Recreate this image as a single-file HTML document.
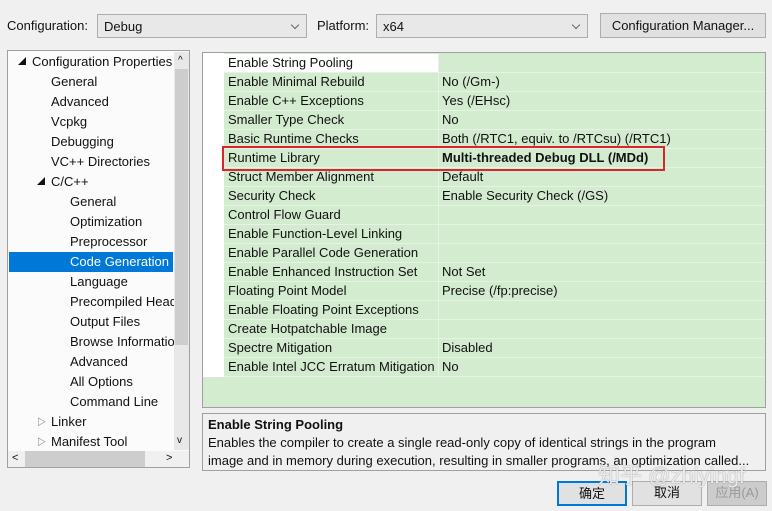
<!DOCTYPE html>
<html><head><style>
*{margin:0;padding:0;box-sizing:border-box}
body{width:772px;height:511px;background:#f0f0f0;font-family:"Liberation Sans","Noto Sans CJK SC",sans-serif;font-size:13px;color:#111;position:relative;overflow:hidden}
.a{position:absolute;white-space:nowrap}
.combo{position:absolute;border:1px solid #adadad;background:#e8e8e8;height:24px;padding:4px 6px}
.combo:after{content:"";position:absolute;right:8px;top:7px;width:5px;height:5px;border-right:1px solid #666;border-bottom:1px solid #666;transform:rotate(45deg)}
.btn{position:absolute;border:1px solid #adadad;background:#e1e1e1;text-align:center;line-height:22px}
.tree{position:absolute;left:7px;top:50px;width:183px;height:418px;border:1px solid #a0a0a0;background:#fbfbfb}
.ti{position:absolute;height:20px;line-height:20px;white-space:nowrap}
.grid{position:absolute;left:202px;top:52px;width:564px;height:356px;border:1px solid #a0a0a0;background:#d3ebcf}
.row{position:absolute;left:21px;width:541px;height:19px;border-bottom:1px solid #e6f2e3;line-height:18px;white-space:nowrap}
.row .n{position:absolute;left:4px}
.row .v{position:absolute;left:218px}
.row:before{content:"";position:absolute;left:214px;top:0;bottom:0;border-left:1px solid #e8f3e6}
</style></head><body>
<div class="a" style="left:7px;top:18px">Configuration:</div>
<div class="combo" style="left:97px;top:14px;width:210px">Debug</div>
<div class="a" style="left:317px;top:18px">Platform:</div>
<div class="combo" style="left:376px;top:14px;width:212px">x64</div>
<div class="btn" style="left:600px;top:13px;width:166px;height:25px;line-height:23px">Configuration Manager...</div>

<div class="tree">
<div class="a" style="left:166px;top:1px;width:15px;height:398px;background:#e8e8e8"></div>
<div class="a" style="left:167px;top:18px;width:13px;height:276px;background:#cdcdcd"></div>
<div class="a" style="left:170px;top:4px;font-size:10px">^</div>
<div class="a" style="left:169px;top:384px;font-size:10px">v</div>
<div class="a" style="left:0;top:400px;width:181px;height:16px;background:#f0f0f0"></div>
<div class="a" style="left:17px;top:400px;width:120px;height:16px;background:#cdcdcd"></div>
<div class="a" style="left:4px;top:401px;font-size:11px">&lt;</div>
<div class="a" style="left:158px;top:401px;font-size:11px">&gt;</div>
<div class="a" style="left:1px;top:201px;width:164px;height:20px;background:#0078d7"></div>
<div class="ti" style="left:10px;top:1px;font-size:8px">◢</div>
<div class="ti" style="left:24px;top:1px;width:142px;overflow:hidden">Configuration Properties</div>
<div class="ti" style="left:43px;top:21px">General</div>
<div class="ti" style="left:43px;top:41px">Advanced</div>
<div class="ti" style="left:43px;top:61px">Vcpkg</div>
<div class="ti" style="left:43px;top:81px">Debugging</div>
<div class="ti" style="left:43px;top:101px">VC++ Directories</div>
<div class="ti" style="left:29px;top:121px;font-size:8px">◢</div>
<div class="ti" style="left:43px;top:121px">C/C++</div>
<div class="ti" style="left:62px;top:141px">General</div>
<div class="ti" style="left:62px;top:161px">Optimization</div>
<div class="ti" style="left:62px;top:181px">Preprocessor</div>
<div class="ti" style="left:62px;top:201px;color:#fff">Code Generation</div>
<div class="ti" style="left:62px;top:221px">Language</div>
<div class="ti" style="left:62px;top:241px;width:104px;overflow:hidden">Precompiled Headers</div>
<div class="ti" style="left:62px;top:261px">Output Files</div>
<div class="ti" style="left:62px;top:281px;width:104px;overflow:hidden">Browse Information</div>
<div class="ti" style="left:62px;top:301px">Advanced</div>
<div class="ti" style="left:62px;top:321px">All Options</div>
<div class="ti" style="left:62px;top:341px">Command Line</div>
<div class="ti" style="left:29px;top:361px;font-size:9px;color:#555">▷</div>
<div class="ti" style="left:43px;top:361px">Linker</div>
<div class="ti" style="left:29px;top:381px;font-size:9px;color:#555">▷</div>
<div class="ti" style="left:43px;top:381px">Manifest Tool</div>
</div>

<div class="grid">
<div class="a" style="left:0;top:0;width:21px;height:324px;background:#fff"></div>
<div class="a" style="left:21px;top:1px;width:214px;height:19px;background:#fff"></div>
<div class="row" style="top:1px"><span class="n">Enable String Pooling</span></div>
<div class="row" style="top:20px"><span class="n">Enable Minimal Rebuild</span><span class="v">No (/Gm-)</span></div>
<div class="row" style="top:39px"><span class="n">Enable C++ Exceptions</span><span class="v">Yes (/EHsc)</span></div>
<div class="row" style="top:58px"><span class="n">Smaller Type Check</span><span class="v">No</span></div>
<div class="row" style="top:77px"><span class="n">Basic Runtime Checks</span><span class="v">Both (/RTC1, equiv. to /RTCsu) (/RTC1)</span></div>
<div class="row" style="top:96px"><span class="n">Runtime Library</span><span class="v" style="font-weight:bold">Multi-threaded Debug DLL (/MDd)</span></div>
<div class="row" style="top:115px"><span class="n">Struct Member Alignment</span><span class="v">Default</span></div>
<div class="row" style="top:134px"><span class="n">Security Check</span><span class="v">Enable Security Check (/GS)</span></div>
<div class="row" style="top:153px"><span class="n">Control Flow Guard</span></div>
<div class="row" style="top:172px"><span class="n">Enable Function-Level Linking</span></div>
<div class="row" style="top:191px"><span class="n">Enable Parallel Code Generation</span></div>
<div class="row" style="top:210px"><span class="n">Enable Enhanced Instruction Set</span><span class="v">Not Set</span></div>
<div class="row" style="top:229px"><span class="n">Floating Point Model</span><span class="v">Precise (/fp:precise)</span></div>
<div class="row" style="top:248px"><span class="n">Enable Floating Point Exceptions</span></div>
<div class="row" style="top:267px"><span class="n">Create Hotpatchable Image</span></div>
<div class="row" style="top:286px"><span class="n">Spectre Mitigation</span><span class="v">Disabled</span></div>
<div class="row" style="top:305px"><span class="n">Enable Intel JCC Erratum Mitigation</span><span class="v">No</span></div>
</div>
<div class="a" style="left:222px;top:146px;width:443px;height:25px;border:2px solid #d8262c"></div>

<div class="a" style="left:202px;top:413px;width:564px;height:58px;border:1px solid #a0a0a0;background:#f0f0f0"></div>
<div class="a" style="left:208px;top:417px;font-weight:bold">Enable String Pooling</div>
<div class="a" style="left:208px;top:435px">Enables the compiler to create a single read-only copy of identical strings in the program</div>
<div class="a" style="left:208px;top:453px">image and in memory during execution, resulting in smaller programs, an optimization called...</div>

<div class="btn" style="left:557px;top:481px;width:70px;height:25px;border:2px solid #0078d7">确定</div>
<div class="btn" style="left:632px;top:481px;width:70px;height:25px">取消</div>
<div class="btn" style="left:707px;top:481px;width:60px;height:25px;color:#999;background:#ccc">应用(A)</div>
<div class="a" style="left:598px;top:458px;font-size:22px;color:rgba(255,255,255,0.85);text-shadow:0 0 1px #666">知乎 @zhiyingf</div>
</body></html>
